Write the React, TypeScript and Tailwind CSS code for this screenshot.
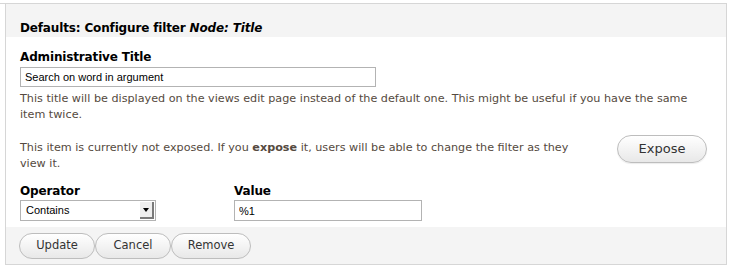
export default function App() {
  const font = { fontFamily: '"DejaVu Sans", Verdana, sans-serif' }
  const arial = { fontFamily: '"Liberation Sans", Arial, sans-serif' }
  return (
    <div className="w-[730px] h-[269px] bg-white pt-[3px]" style={font}>
      <div className="w-[727px] border-t border-[#d6d6d6]">
        <div className="ml-[5px] w-[722px] border-l border-r border-b border-[#d6d6d6]">
          {/* header */}
          <div className="h-[33px] bg-[#f4f4f4] pl-[14px] pt-[16px] text-[12px] font-bold leading-[16px] tracking-[-0.15px] text-black">
            Defaults: Configure filter <em>Node: Title</em>
          </div>

          {/* body */}
          <div className="pl-[14px] pr-[14px] pt-[12px] text-[11.2px] text-[#554a40]">
            <label className="block text-[12px] font-bold leading-[16px] tracking-[-0.15px] text-black">Administrative Title</label>
            <input
              defaultValue="Search on word in argument"
              className="mt-[2px] block h-[20px] w-[356px] border border-[#b3b3b3] bg-white px-[4px] text-[11px] leading-[18px] text-black outline-none"
              style={arial}
            />
            <p className="mt-[4px] leading-[16px]">
              This title will be displayed on the views edit page instead of the default one. This might be useful if you have the same item twice.
            </p>

            <div className="mt-[17px] flex items-start justify-between">
              <p className="w-[570px] leading-[16px]">
                This item is currently not exposed. If you <strong>expose</strong> it, users will be able to change the filter as they view it.
              </p>
              <button className="mr-[5px] -mt-[5px] h-[28px] w-[90px] rounded-full border border-[#bdbdbd] bg-gradient-to-b from-white to-[#e8e8e8] text-[13px] text-[#333] shadow-[0_1px_1px_rgba(0,0,0,0.08)]">
                Expose
              </button>
            </div>

            <div className="mt-[11px] flex gap-[78px]">
              <div>
                <label className="block text-[12px] font-bold leading-[16px] tracking-[-0.15px] text-black">Operator</label>
                <div
                  className="mt-[1px] flex h-[21px] w-[136px] items-center justify-between border border-[#b3b3b3] bg-white pl-[5px] text-[11px] text-black"
                  style={arial}
                >
                  <span>Contains</span>
                  <span className="mr-[1px] flex h-[17px] w-[14px] items-center justify-center border-r-2 border-b-2 border-[#7a7a7a] bg-[#eeeeee]">
                    <span className="h-0 w-0 border-l-[3px] border-r-[3px] border-t-[4px] border-l-transparent border-r-transparent border-t-black" />
                  </span>
                </div>
              </div>
              <div>
                <label className="block text-[12px] font-bold leading-[16px] tracking-[-0.15px] text-black">Value</label>
                <input
                  defaultValue="%1"
                  className="mt-[1px] block h-[21px] w-[188px] border border-[#b3b3b3] bg-white px-[4px] text-[11px] text-black outline-none"
                  style={arial}
                />
              </div>
            </div>
          </div>

          {/* footer */}
          <div className="mt-[6px] flex h-[37px] items-center bg-[#f4f4f4] pl-[13px]">
            {['Update', 'Cancel', 'Remove'].map((label) => (
              <button
                key={label}
                className="h-[26px] w-[76px] rounded-full border border-[#bdbdbd] bg-gradient-to-b from-white to-[#e8e8e8] text-[11.5px] text-[#333] [&:last-child]:w-[80px]"
              >
                {label}
              </button>
            ))}
          </div>
        </div>
      </div>
    </div>
  )
}
